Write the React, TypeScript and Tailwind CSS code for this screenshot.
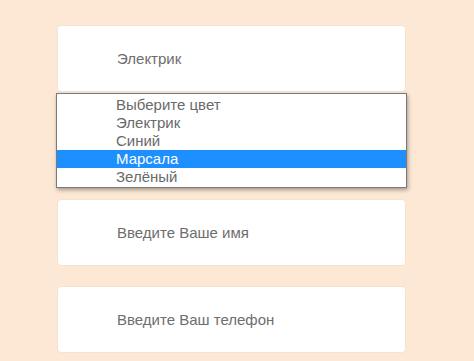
const colors = ["Выберите цвет", "Электрик", "Синий", "Марсала", "Зелёный"];

function Field({ label }: { label: string }) {
  return (
    <div className="h-[67px] rounded-[4px] bg-white border border-[#f3e3d3] flex items-center pl-[59px] pt-[2px]">
      <span className="text-[15px] text-[#6e6e6e]">{label}</span>
    </div>
  );
}

export default function App() {
  const selected = 3;
  return (
    <div
      className="h-[361px] w-[474px] bg-[#fde8d5] overflow-hidden pt-[25px] pl-[57px]"
      style={{ fontFamily: '"Liberation Sans", Arial, sans-serif' }}
    >
      <div className="w-[349px]">
        {/* select with open list */}
        <div className="relative">
          <Field label="Электрик" />
          <ul className="absolute left-[-1px] top-[68px] w-[351px] bg-white border border-[#7a7a7a] shadow-[1px_2px_4px_rgba(0,0,0,0.35)] pt-[2px] pb-[1px] z-10">
            {colors.map((c, i) => (
              <li
                key={c}
                className={`h-[18px] leading-[18px] pl-[59px] text-[15px] ${
                  i === selected ? "bg-[#1e8fff] text-white" : "text-[#6a6a6a]"
                }`}
              >
                {c}
              </li>
            ))}
          </ul>
        </div>

        <div className="mt-[107px] flex flex-col gap-[20px]">
          <Field label="Введите Ваше имя" />
          <Field label="Введите Ваш телефон" />
        </div>
      </div>
    </div>
  );
}
